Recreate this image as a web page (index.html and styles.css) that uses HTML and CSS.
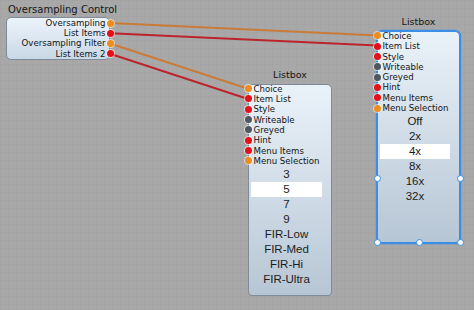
FILE: index.html
```html
<!DOCTYPE html>
<html>
<head>
<meta charset="utf-8">
<link rel="stylesheet" href="styles.css">
</head>
<body>
<div class="canvas">
  <svg class="wires" width="474" height="310" viewBox="0 0 474 310">
    <line x1="110" y1="23" x2="377.5" y2="35.5" class="w-orange"/>
    <line x1="110" y1="33.3" x2="377.5" y2="45.5" class="w-red"/>
    <line x1="110" y1="43.5" x2="248" y2="88.7" class="w-orange"/>
    <line x1="110" y1="53.7" x2="248" y2="99" class="w-red"/>
  </svg>

  <div class="node ctrl">
    <div class="title">Oversampling Control</div>
    <div class="box">
      <div class="out"><span>Oversampling</span><i class="dot orange"></i></div>
      <div class="out"><span>List Items</span><i class="dot red"></i></div>
      <div class="out"><span>Oversampling Filter</span><i class="dot orange"></i></div>
      <div class="out"><span>List Items 2</span><i class="dot red"></i></div>
    </div>
  </div>

  <div class="node listbox lb-mid">
    <div class="title">Listbox</div>
    <div class="box">
      <div class="ports">
        <div class="in"><i class="dot orange"></i><span>Choice</span></div>
        <div class="in"><i class="dot red"></i><span>Item List</span></div>
        <div class="in"><i class="dot red"></i><span>Style</span></div>
        <div class="in"><i class="dot gray"></i><span>Writeable</span></div>
        <div class="in"><i class="dot gray"></i><span>Greyed</span></div>
        <div class="in"><i class="dot red"></i><span>Hint</span></div>
        <div class="in"><i class="dot red"></i><span>Menu Items</span></div>
        <div class="in"><i class="dot orange"></i><span>Menu Selection</span></div>
      </div>
      <ul class="items">
        <li>3</li>
        <li class="sel">5</li>
        <li>7</li>
        <li>9</li>
        <li>FIR-Low</li>
        <li>FIR-Med</li>
        <li>FIR-Hi</li>
        <li>FIR-Ultra</li>
      </ul>
    </div>
  </div>

  <div class="node listbox lb-right">
    <div class="title">Listbox</div>
    <div class="box selected">
      <div class="ports">
        <div class="in"><i class="dot orange"></i><span>Choice</span></div>
        <div class="in"><i class="dot red"></i><span>Item List</span></div>
        <div class="in"><i class="dot red"></i><span>Style</span></div>
        <div class="in"><i class="dot gray"></i><span>Writeable</span></div>
        <div class="in"><i class="dot gray"></i><span>Greyed</span></div>
        <div class="in"><i class="dot red"></i><span>Hint</span></div>
        <div class="in"><i class="dot red"></i><span>Menu Items</span></div>
        <div class="in"><i class="dot orange"></i><span>Menu Selection</span></div>
      </div>
      <ul class="items">
        <li>Off</li>
        <li>2x</li>
        <li class="sel">4x</li>
        <li>8x</li>
        <li>16x</li>
        <li>32x</li>
      </ul>
      <i class="handle h-ml"></i>
      <i class="handle h-mr"></i>
      <i class="handle h-bl"></i>
      <i class="handle h-bc"></i>
      <i class="handle h-br"></i>
    </div>
  </div>
</div>
</body>
</html>
```
FILE: styles.css
```css
* { box-sizing: border-box; }
html, body { margin: 0; padding: 0; }
body {
  width: 474px;
  height: 310px;
  overflow: hidden;
  font-family: "DejaVu Sans", "Liberation Sans", sans-serif;
}
.canvas {
  position: relative;
  width: 474px;
  height: 310px;
  background-color: #a8a8a8;
  background-image:
    linear-gradient(rgba(0,0,0,0.018) 1px, transparent 1px),
    linear-gradient(90deg, rgba(0,0,0,0.018) 1px, transparent 1px);
  background-size: 8px 8px;
}
.wires { position: absolute; left: 0; top: 0; }
.wires line { stroke-width: 2; stroke-linecap: round; }
.w-orange { stroke: #c97b38; }
.w-red { stroke: #bc242b; }

.node { position: absolute; display: flex; flex-direction: column; }
.title {
  font-size: 10px;
  line-height: 14px;
  height: 14px;
  color: #151515;
  white-space: nowrap;
}
.box {
  position: relative;
  border: 1px solid #7f8b98;
  border-radius: 5px;
  background: linear-gradient(to bottom, #eaf2f9, #b7c6d5);
}
.dot {
  display: block;
  flex: none;
  width: 7px;
  height: 7px;
  border-radius: 50%;
  box-shadow: 0 0 0 1px rgba(255,255,255,0.55);
}
.dot.orange { background: #f08c1c; }
.dot.red { background: #e5101a; }
.dot.gray { background: #4e5660; }

/* control node */
.ctrl { left: 6px; top: 3px; width: 104px; }
.ctrl .title { margin-left: 2px; }
.ctrl .box {
  height: 42.5px;
  background: linear-gradient(to bottom, #ecf3fa, #c9d8e6);
}
.out {
  display: flex;
  justify-content: flex-end;
  align-items: center;
  gap: 1px;
  height: 10.2px;
  font-size: 8.6px;
  color: #141414;
  white-space: nowrap;
}
.out .dot { margin-right: -4.5px; }

/* listbox nodes */
.listbox .title { text-align: center; font-size: 9.5px; }
.listbox .box { margin-top: 1.5px; height: 212px; border-radius: 5px 5px 4px 4px; }
.lb-mid { left: 248px; top: 68px; width: 84px; }
.lb-right { left: 377px; top: 15.2px; width: 83px; }
.ports { margin-top: -1px; }
.in {
  display: flex;
  align-items: center;
  height: 10.34px;
  font-size: 8.6px;
  color: #141414;
  white-space: nowrap;
}
.in .dot { margin-left: -4.5px; margin-right: 2px; }
.items {
  list-style: none;
  margin: 1px 9px 0 2px;
  padding: 0;
  font-family: "Liberation Sans", Arial, sans-serif;
  font-size: 11.5px;
  color: #1c1c1c;
}
.items li {
  height: 15px;
  line-height: 15px;
  text-align: center;
}
.items li.sel { background: #ffffff; }

.box.selected {
  border-color: #3a8ee6;
  box-shadow: 0 0 0 1.2px #3a8ee6;
}
.handle {
  position: absolute;
  display: block;
  width: 7px;
  height: 7px;
  border-radius: 50%;
  background: #ffffff;
  border: 1.2px solid #3a8ee6;
}
.h-ml { left: -4.5px; top: 143.5px; }
.h-mr { right: -4.5px; top: 143.5px; }
.h-bl { left: -4.5px; bottom: -4.5px; }
.h-bc { left: 37.5px; bottom: -4.5px; }
.h-br { right: -4.5px; bottom: -4.5px; }
```
